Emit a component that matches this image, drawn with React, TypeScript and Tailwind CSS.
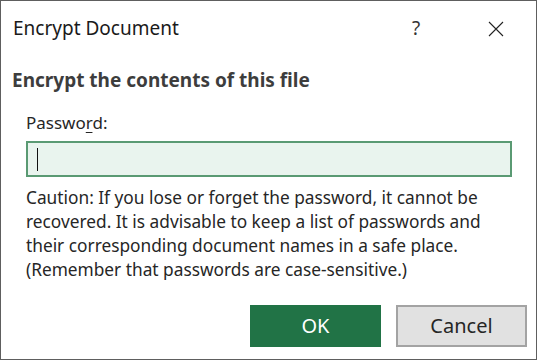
export default function App() {
  return (
    <div className="h-[361px] w-[538px] bg-white">
      <div
        className="flex h-[360px] w-[537px] flex-col border border-[#5e5e5e] bg-white text-[#262626]"
        style={{ fontFamily: '"Noto Sans", "Open Sans", sans-serif' }}
      >
        {/* Title bar */}
        <div className="flex h-[55px] items-center pl-[12px]">
          <div className="flex-1 text-[19px] text-[#1a1a1a]">Encrypt Document</div>
          <div className="w-[80px] text-center text-[19px] text-[#333]">?</div>
          <div className="flex w-[80px] items-center justify-center">
            <svg width="16" height="16" viewBox="0 0 16 16" fill="none" stroke="#222" strokeWidth="1.1">
              <path d="M1 1L15 15M15 1L1 15" />
            </svg>
          </div>
        </div>

        <div className="pl-[11px] pt-[12px] text-[19px] font-bold leading-[24px] text-[#3d3d3d]">
          Encrypt the contents of this file
        </div>

        <div className="flex flex-col pl-[25px] pr-[24px]">
          <div className="mt-[20px] text-[17px] leading-[22px]">
            Passwo<span className="underline underline-offset-[3px]">r</span>d:
          </div>
          <div className="mt-[7px] flex h-[36px] items-center border-2 border-[#5a9a73] bg-[#e9f4ee] pl-[9px]">
            <div className="h-[23px] w-px bg-[#111]" />
          </div>
          <p className="mt-[9px] text-[17.3px] leading-[24px]">
            Caution: If you lose or forget the password, it cannot be
            <br />
            recovered. It is advisable to keep a list of passwords and
            <br />
            their corresponding document names in a safe place.
            <br />
            (Remember that passwords are case-sensitive.)
          </p>
        </div>

        <div className="mt-auto mb-[12px] flex justify-end gap-[15px] pr-[9px]">
          <button className="h-[42px] w-[131px] bg-[#217346] text-[20px] text-white">OK</button>
          <button className="h-[42px] w-[131px] border-2 border-[#a3a3a3] bg-[#e1e1e1] text-[20px] text-[#262626]">
            Cancel
          </button>
        </div>
      </div>
    </div>
  );
}
